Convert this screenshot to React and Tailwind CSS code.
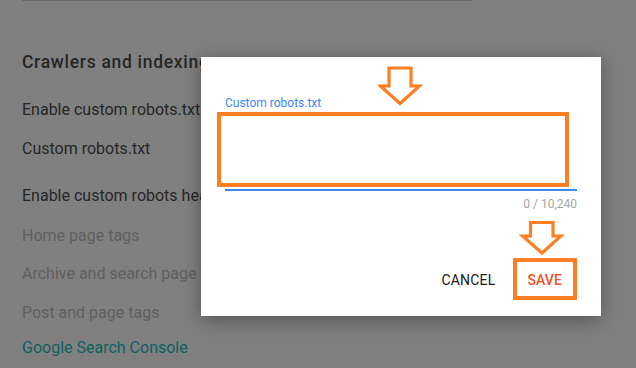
import React from 'react';

// Blogger settings page behind a modal with orange annotation marks
const rows = [
  { text: 'Enable custom robots.txt', mt: 'mt-[28px]', tone: 'text-[#262626]' },
  { text: 'Custom robots.txt', mt: 'mt-[19px]', tone: 'text-[#262626]' },
  { text: 'Enable custom robots header tags', mt: 'mt-[27px]', tone: 'text-[#262626]' },
  { text: 'Home page tags', mt: 'mt-[20px]', tone: 'text-[#5f5f5f]' },
  { text: 'Archive and search page tags', mt: 'mt-[18px]', tone: 'text-[#5f5f5f]' },
  { text: 'Post and page tags', mt: 'mt-[19px]', tone: 'text-[#5f5f5f]' },
];

const Arrow = ({ className, d, viewBox }) => (
  <svg className={className} viewBox={viewBox} fill="none">
    <path d={d} fill="#fff" stroke="#fd7e23" strokeWidth="3.2" strokeLinejoin="miter" />
  </svg>
);

export default function App() {
  return (
    <div className="relative w-[636px] h-[368px] overflow-hidden bg-[#808080] font-['Roboto','Liberation_Sans',sans-serif]">
      {/* background settings list */}
      <div className="flex flex-col pl-[22px]">
        <div className="w-[450px] h-px bg-[#6a6a6a]" />
        <div className="mt-[51px] h-[20px] leading-[20px] text-[17.5px] font-medium text-[#262626] tracking-[0.7px] whitespace-nowrap">
          Crawlers and indexing
        </div>
        {rows.map((r) => (
          <div key={r.text} className={`${r.mt} h-[20px] leading-[20px] text-[16px] whitespace-nowrap ${r.tone}`}>
            {r.text}
          </div>
        ))}
        <div className="mt-[15px] h-[20px] leading-[20px] text-[16px] text-[#0d5f61]">Google Search Console</div>
      </div>

      {/* dialog */}
      <div className="absolute left-[201px] top-[57px] w-[400px] h-[259px] flex flex-col bg-white shadow-[0_4px_18px_rgba(0,0,0,0.35)]">
        <div className="flex flex-col px-[24px] pt-[38px]">
          <div className="text-[12px] leading-[16px] text-[#4285f4]">Custom robots.txt</div>
          <div className="h-[80px] border-b-2 border-[#4285f4]" />
          <div className="mt-[5px] text-right text-[12px] leading-[16px] text-[#a3a3a3]">0 / 10,240</div>
        </div>
        <div className="mt-[58px] flex justify-end items-center pr-[39px] gap-[32px] text-[14px] leading-[20px]">
          <span className="text-[#202020] tracking-[0.2px]">CANCEL</span>
          <span className="text-[#f4511e] font-medium tracking-[0.1px]">SAVE</span>
        </div>
      </div>

      {/* annotations */}
      <div className="absolute left-[217px] top-[112px] w-[352px] h-[75px] border-[4px] border-[#fd7e23]" />
      <div className="absolute left-[513px] top-[258px] w-[64px] h-[42px] border-[4px] border-[#fd7e23]" />
      <Arrow
        className="absolute left-[378px] top-[65px] w-[45px] h-[42px]"
        viewBox="0 0 45 42"
        d="M11 3 H33 V21 H41.5 L22 38.5 L2.5 21 H11 Z"
      />
      <Arrow
        className="absolute left-[519px] top-[219px] w-[46px] h-[38px]"
        viewBox="0 0 46 38"
        d="M11.5 3.5 H34 V17 H42 L23 34 L3.5 17 H11.5 Z"
      />
    </div>
  );
}
